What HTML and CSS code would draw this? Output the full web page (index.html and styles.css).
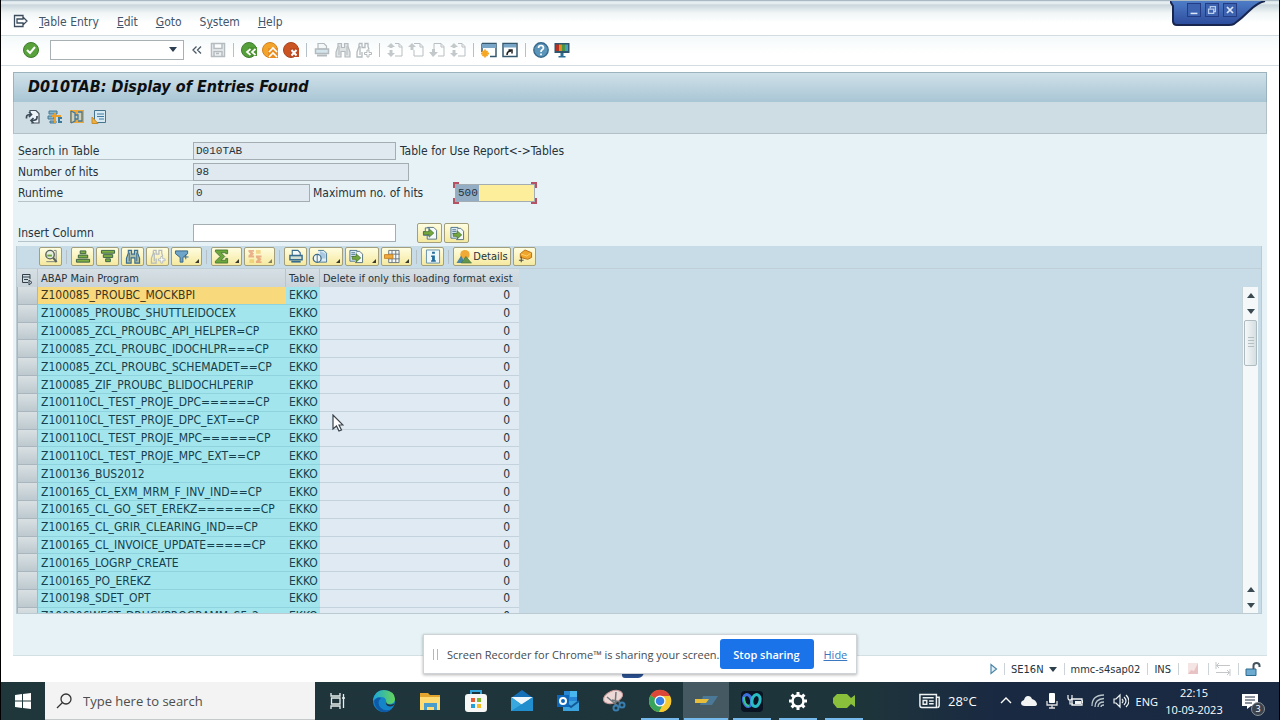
FILE: index.html
```html
<!DOCTYPE html>
<html lang="en">
<head>
    <meta charset="UTF-8">
    <meta name="viewport" content="width=device-width, initial-scale=1.0">
    <title>D010TAB: Display of Entries Found</title>
    <link rel="stylesheet" href="styles.css">
</head>
<body>

    <!-- Shared icon shapes -->
    <svg class="sprite" aria-hidden="true">
        <symbol id="i-menu" viewBox="0 0 16 16"><path d="M10 3V1.500H1.500v11H10V11M4 5h6V3l4 4-4 4V9H4z" fill="none" stroke="#3c4c5c" stroke-width="1.300"/></symbol>
        <symbol id="i-save" viewBox="0 0 16 16"><path d="M1.500 1.500h13v13h-13zM4 1.500v5h8v-5M4 14.500v-5h8v5M6 11.500h3" fill="#eef1f2" stroke="#b4bcc0" stroke-width="1.500"/></symbol>
        <symbol id="i-print" viewBox="0 0 16 16"><path d="M4 7V1.500h6l2.500 2.500v3z" fill="#f5f8f8" stroke="currentColor" stroke-width="1.200"/><path d="M1.500 7h13v4.500h-13z" fill="#b9d3e0" fill-opacity=".6" stroke="currentColor" stroke-width="1.500"/><path d="M3 13.500h10" stroke="currentColor" stroke-width="2"/></symbol>
        <symbol id="i-find" viewBox="0 0 16 16"><path d="M3 1.500h3.500v4h3v-4H13v3l2 5.500v5h-5v-5.500H6V15H1v-5l2-5.500z" fill="currentColor" fill-opacity=".4" stroke="currentColor" stroke-width="1.200"/><path d="M4 4v9M12 4v9" stroke="currentColor"/></symbol>
        <symbol id="i-findnext" viewBox="0 0 16 16"><path d="M3 1.500h3v4h3v-4h3v3l1 3M6 10v5H1v-5l2-5.500v-3M4 4v9" fill="none" stroke="currentColor" stroke-width="1.300"/><path d="M11 8h2v2.500h2.500v2H13V15h-2v-2.500H8.500v-2H11z" fill="#fff" stroke="currentColor"/></symbol>
        <symbol id="i-first" viewBox="0 0 16 16"><path d="M8 1.500h4l3 3V14H8M12 1.500V5h3" fill="none" stroke="#b9bfc2"/><path d="M4 1l4 4H5.500v1H2.500V5H0zM4 15l4-4H5.500V8h-3v3H0z" fill="#c3c9cb"/></symbol>
        <symbol id="i-prev" viewBox="0 0 16 16"><path d="M6 1.500h6l3 3V14H6V8M12 1.500V5h3" fill="none" stroke="#b9bfc2"/><path d="M4 1l4 4H5.500v3H2.500V5H0z" fill="#c3c9cb"/></symbol>
        <symbol id="i-next" viewBox="0 0 16 16"><path d="M5 7V1.500h7l3 3V14H9M12 1.500V5h3" fill="none" stroke="#b9bfc2"/><path d="M4 15l5-5H6V7H3v3H0z" fill="#c3c9cb"/></symbol>
        <symbol id="i-copyin" viewBox="0 0 16 16"><path d="M5 1.500h7l3 3V14H5V9" fill="#f4fafc" stroke="#55707c"/><path d="M1 6h2V2h4v8H1z" fill="none" stroke="#4d7391"/><path d="M1 6h6V3l5 4.500L7 12V9H1z" fill="#74a83c" stroke="#456d2c" stroke-width=".8"/></symbol>
        <symbol id="i-copyout" viewBox="0 0 16 16"><path d="M1.500 1.500H9V13H1.500zM3 4h4M3 6h4M3 8h3" fill="#dcebf4" stroke="#4d7391"/><path d="M9 2.500h3l3 3V14.500H7" fill="#f4fafc" stroke="#55707c"/><path d="M4 8h4V5l5 4.500L8 14v-3H4z" fill="#74a83c" stroke="#456d2c" stroke-width=".8"/></symbol>
        <symbol id="i-bars" viewBox="0 0 16 16"><path d="M5 2h6v3H5zM3 6.500h10v3H3zM1 11h14v3H1z" fill="#7eb041" stroke="#395f4a"/></symbol>
        <symbol id="i-barsdown" viewBox="0 0 16 16"><path d="M1 1.500h14v3H1zM3 6h10v3H3zM5.500 10.500h5v3h-5z" fill="#7eb041" stroke="#395f4a"/></symbol>
    </svg>

    <div class="sap-window">
        <header class="menu-bar">
            <button type="button" class="icon-button" aria-label="System menu"><svg><use href="#i-menu"/></svg></button>
            <nav class="menu">
                <a href="#"><u>T</u>able Entry</a>
                <a href="#"><u>E</u>dit</a>
                <a href="#"><u>G</u>oto</a>
                <a href="#">S<u>y</u>stem</a>
                <a href="#"><u>H</u>elp</a>
            </nav>
            <div class="window-controls">
                <svg class="tab-shape" viewBox="0 0 96 26" aria-hidden="true"><defs><linearGradient id="tab" x2="0" y2="1"><stop stop-color="#4d7cc7"/><stop offset="1" stop-color="#2c4b9b"/></linearGradient></defs><path d="M0 0h95q-8 2-16 10T64 23q-2 1-5 1H7q-4 0-4-4V5z" fill="url(#tab)"/><path d="M95 0q-8 2-16 10T64 23q-2 1-5 1H7q-4 0-4-4V5L0 0" fill="none" stroke="#17254f" stroke-width="2"/></svg>
                <button type="button" aria-label="Minimize"><svg viewBox="0 0 14 14"><path d="M3 11h8" stroke="#dce8fa" stroke-width="1.800"/></svg></button>
                <button type="button" aria-label="Restore"><svg viewBox="0 0 14 14"><path d="M3 6h6v5H3zM5 5V3h6v6H9" fill="none" stroke="#b9cdec" stroke-width="1.500"/></svg></button>
                <button type="button" aria-label="Close"><svg viewBox="0 0 14 14"><path d="M3.500 3.500l7 7m0-7l-7 7" stroke="#dce8fa" stroke-width="2"/></svg></button>
            </div>
        </header>

        <!-- Standard toolbar -->
        <div class="standard-toolbar">
            <button type="button" class="icon-button enter" aria-label="Enter"><svg viewBox="0 0 16 16"><circle cx="8" cy="8" r="7.500" fill="#58a13b" stroke="#3d7d2b"/><path d="M4 8l3 3 5-6" fill="none" stroke="#fff" stroke-width="2"/></svg></button>
            <div class="command">
                <input type="text" aria-label="Command field">
                <button type="button" aria-label="Command history"><svg viewBox="0 0 8 5"><path d="M0 0h8L4 5z" fill="#2d3f52"/></svg></button>
            </div>
            <button type="button" class="icon-button" aria-label="Hide command field"><svg viewBox="0 0 16 16"><path d="M7.500 4.500L4 8l3.500 3.500M12 4.500L8.500 8l3.500 3.500" fill="none" stroke="#4b5a66" stroke-width="1.300"/></svg></button>
            <button type="button" class="icon-button" aria-label="Save"><svg><use href="#i-save"/></svg></button>
            <span class="separator"></span>
            <button type="button" class="icon-button" aria-label="Back"><svg viewBox="0 0 16 16"><circle cx="8" cy="8" r="7.500" fill="#55a03a" stroke="#407d31"/><path d="M7 5h9v9H7z" fill="#4b9331"/><path d="M9.500 7L6 10l3.500 3M14.500 7L11 10l3.500 3" fill="none" stroke="#fff" stroke-width="1.700"/></svg></button>
            <button type="button" class="icon-button" aria-label="Exit"><svg viewBox="0 0 16 16"><circle cx="8" cy="8" r="7.500" fill="#f3a42a" stroke="#d0811f"/><path d="M6 6h10v10H6z" fill="#e98f22"/><path d="M7 10l4-4 4 4M7 15l4-4 4 4" fill="none" stroke="#fff" stroke-width="1.700"/></svg></button>
            <button type="button" class="icon-button" aria-label="Cancel"><svg viewBox="0 0 16 16"><circle cx="8" cy="8" r="7.500" fill="#cb5522" stroke="#a84420"/><path d="M7 6h9v9H7z" fill="#bd4a20"/><path d="M8.500 8l5 5.500m0-5.500l-5 5.500" stroke="#fff" stroke-width="2"/></svg></button>
            <span class="separator"></span>
            <button type="button" class="icon-button muted" aria-label="Print"><svg><use href="#i-print"/></svg></button>
            <button type="button" class="icon-button muted" aria-label="Find"><svg><use href="#i-find"/></svg></button>
            <button type="button" class="icon-button muted" aria-label="Find next"><svg><use href="#i-findnext"/></svg></button>
            <span class="separator"></span>
            <button type="button" class="icon-button" aria-label="First page"><svg><use href="#i-first"/></svg></button>
            <button type="button" class="icon-button" aria-label="Previous page"><svg><use href="#i-prev"/></svg></button>
            <button type="button" class="icon-button" aria-label="Next page"><svg><use href="#i-next"/></svg></button>
            <button type="button" class="icon-button" aria-label="Last page"><svg><use href="#i-first"/></svg></button>
            <span class="separator"></span>
            <button type="button" class="icon-button" aria-label="New session"><svg viewBox="0 0 16 16"><path d="M1 1.500h14v13H9M1 10V1.500" fill="none" stroke="#36586e" stroke-width="1.500"/><path d="M1 2h14v4H1z" fill="#79a6c6"/><path d="M4 7.500v8M0 11.500h8M1.500 9l5 5m0-5l-5 5" stroke="#f5a623" stroke-width="1.800"/></svg></button>
            <button type="button" class="icon-button" aria-label="Create shortcut"><svg viewBox="0 0 16 16"><path d="M1 1.500h14v13H1z" fill="#fff" stroke="#36586e" stroke-width="1.500"/><path d="M2 2h12v3.500H2z" fill="#79a6c6"/><path d="M5 13q0-4 4-4M6.500 8H10v3.500" fill="none" stroke="#222" stroke-width="1.500"/></svg></button>
            <span class="separator"></span>
            <button type="button" class="icon-button" aria-label="Help"><svg viewBox="0 0 16 16"><circle cx="8" cy="8" r="7.200" fill="#5b95b9" stroke="#376a8d" stroke-width="1.400"/><path d="M5.500 6q0-2.500 2.500-2.500T10.500 6q0 1-1.300 1.800T8 10M8 11.500v1.700" fill="none" stroke="#fff" stroke-width="1.700"/></svg></button>
            <button type="button" class="icon-button" aria-label="Customize layout"><svg viewBox="0 0 16 16"><path d="M.5 1h15v10H.5z" fill="#2f566f"/><path d="M2 2.500h3V9H2z" fill="#b73123"/><path d="M5 2.500h3V9H5z" fill="#e58d25"/><path d="M8 2.500h3V9H8z" fill="#4d9443"/><path d="M11 2.500h3V9h-3z" fill="#45a4b7"/><path d="M6.500 11h3v3h2v1.500h-7V14h2z" fill="#2d6e93"/></svg></button>
        </div>

        <main class="screen">
            <h1 class="screen-title">D010TAB: Display of Entries Found</h1>
            <div class="app-toolbar">
                <button type="button" class="icon-button" aria-label="Refresh"><svg viewBox="0 0 16 16"><path d="M5 4V1.500h6l3 3V14H6" fill="#eef5f8" stroke="#46535e" stroke-width="1.200"/><path d="M1.500 9.500V8q0-2.500 4-2.500M4 3l2.500 2.500L4 8M12 7v1.500q0 3-5 3M8.500 9L6 11.500 8.500 14" fill="none" stroke="#3c4b58" stroke-width="1.700"/></svg></button>
                <button type="button" class="icon-button" aria-label="Check"><svg viewBox="0 0 16 16"><path d="M2 2h8v3H2zM1 7h6v3H1zM3 12h6v2H3z" fill="#85b3c7" stroke="#447995"/><path d="M7 4h2v10H7zM5 6h9v2H5z" fill="#eba02e"/><path d="M15 9h-3v4h3" fill="none" stroke="#39799c" stroke-width="2"/></svg></button>
                <button type="button" class="icon-button" aria-label="Settings"><svg viewBox="0 0 16 16"><path d="M1 1h14v13H1z" fill="#eba83c"/><path d="M2 2v12M2 14l4-2V4L2 2M6 6h3v4H6M9 3h4v9H9" fill="#c7dfec" fill-opacity=".7" stroke="#43799b" stroke-width="1.300"/></svg></button>
                <button type="button" class="icon-button" aria-label="Technical view"><svg viewBox="0 0 16 16"><path d="M3.500 1.500h11v12h-11z" fill="#d7e9f3" stroke="#46748f"/><path d="M6 5h7M6 7.500h7M8 10h5" stroke="#3f7aa0"/><path d="M1 8l6 6.500H1z" fill="#f0b03d" stroke="#c88c2a"/></svg></button>
            </div>

            <form class="selection">
                <div class="field-row">
                    <label for="table">Search in Table</label>
                    <input id="table" class="wide" type="text" value="D010TAB" readonly>
                    <span class="note">Table for Use Report&lt;-&gt;Tables</span>
                </div>
                <div class="field-row">
                    <label for="hits">Number of hits</label>
                    <input id="hits" class="wider" type="text" value="98" readonly>
                </div>
                <div class="field-row">
                    <label for="runtime">Runtime</label>
                    <input id="runtime" class="short" type="text" value="0" readonly>
                    <label class="inline-label" for="max">Maximum no. of hits</label>
                    <div class="focus-field">
                        <input id="max" type="text" value="500">
                        <i></i><i></i><i></i><i></i>
                    </div>
                </div>
                <div class="field-row insert-row">
                    <label for="column">Insert Column</label>
                    <input id="column" class="wide" type="text">
                    <div class="insert-buttons">
                        <button type="button" class="sap-button" aria-label="Insert column"><svg><use href="#i-copyin"/></svg></button>
                        <button type="button" class="sap-button" aria-label="Export column"><svg><use href="#i-copyout"/></svg></button>
                    </div>
                </div>
            </form>

            <section class="alv">
                <div class="alv-toolbar">
                    <button type="button" class="sap-button" aria-label="Details view"><svg viewBox="0 0 16 16"><path d="M11 1.500h2.500v12H3" fill="none" stroke="#77817d"/><circle cx="7" cy="6" r="4.500" fill="#e5eddf" stroke="#59645e" stroke-width="1.500"/><path d="M10 9l4 5" stroke="#59645e" stroke-width="2.200"/><path d="M4 7h5" stroke="#6aa336" stroke-width="2"/></svg></button>
                    <span class="separator"></span>
                    <button type="button" class="sap-button" aria-label="Sort ascending"><svg><use href="#i-bars"/></svg></button>
                    <button type="button" class="sap-button" aria-label="Sort descending"><svg><use href="#i-barsdown"/></svg></button>
                    <button type="button" class="sap-button blue" aria-label="Find"><svg><use href="#i-find"/></svg></button>
                    <button type="button" class="sap-button muted" aria-label="Find next"><svg><use href="#i-findnext"/></svg></button>
                    <button type="button" class="sap-button split" aria-label="Filter"><svg viewBox="0 0 16 16"><path d="M1 2h13v3L9 9v5H6V9L1 5z" fill="#6ea5c8" stroke="#356486"/><path d="M12 6v5M10 8.500h5" stroke="#356486"/></svg></button>
                    <span class="separator"></span>
                    <button type="button" class="sap-button split" aria-label="Total"><svg viewBox="0 0 16 16"><path d="M1 1h13v4h-2V4H7l4 4-4 4h5v-2h2v5H1v-2l5-5-5-5z" fill="#6ca63c" stroke="#3a6832" stroke-width=".8"/></svg></button>
                    <button type="button" class="sap-button split faded" aria-label="Subtotal"><svg viewBox="0 0 16 16"><path d="M1 1h6v2H5l2 2-2 2h2v2H1V7l2-2-2-2zM9 7h6v2h-2l2 2-2 2h2v2H9v-2l2-2-2-2z" fill="#df8562"/><path d="M9 1h5v4H9zM2 11h5v4H2z" fill="#ecc15c"/></svg></button>
                    <span class="separator"></span>
                    <button type="button" class="sap-button blue" aria-label="Print"><svg><use href="#i-print"/></svg></button>
                    <button type="button" class="sap-button split wide-split" aria-label="Views"><svg viewBox="0 0 16 16"><path d="M6 1.500h6l3 3V14H6" fill="#dcebf4" stroke="#4c7692"/><path d="M8 2v8h6V5z" fill="#aac9df"/><circle cx="5" cy="10" r="4.200" fill="#f2f7f7" stroke="#3e6b8a" stroke-width="1.400"/><path d="M5 6v8" stroke="#3e6b8a"/></svg></button>
                    <button type="button" class="sap-button split wide-split" aria-label="Export"><svg><use href="#i-copyout"/></svg></button>
                    <button type="button" class="sap-button split" aria-label="Layout"><svg viewBox="0 0 16 16"><path d="M4.500 1.500h11v13h-11zM8 1.500v13M12 1.500v13M4 5.500h12M4 10.500h12" fill="#f7faf7" stroke="#67737b"/><path d="M0 6h9v4H0z" fill="#f0a93a" stroke="#c6832a"/></svg></button>
                    <span class="separator"></span>
                    <button type="button" class="sap-button" aria-label="Information"><svg viewBox="0 0 16 16"><path d="M1 1h14v14H1z" fill="#edf6fa" stroke="#628da7"/><path d="M7 3h3v2H7zM6 7h4v5h1v1.500H6V12h1V8.500H6z" fill="#236b9c"/></svg></button>
                    <span class="separator"></span>
                    <button type="button" class="sap-button details"><svg viewBox="0 0 16 16"><circle cx="9" cy="6" r="5" fill="#f0aa35"/><path d="M0 15l5-8 4 8z" fill="#4a86a7"/><path d="M5 15l5-7 6 7z" fill="#63954b" stroke="#3c6d48" stroke-width=".6"/></svg>Details</button>
                    <button type="button" class="sap-button" aria-label="Flag"><svg viewBox="0 0 16 16"><path d="M3 5l5-4 7 3v5l-4 2-8-2z" fill="#f0a52b" stroke="#b36e1c"/><path d="M4 5.500l6 2 4-3" fill="none" stroke="#ffd36b"/><path d="M4 8v6M1.500 12h5" stroke="#575044" stroke-width="1.200"/></svg></button>
                </div>

                <div class="alv-body">
                    <div class="table-area">
                        <table>
                            <colgroup><col class="col-select"><col class="col-program"><col class="col-table"><col class="col-delete"></colgroup>
                            <thead>
                                <tr><th><svg class="select-all" viewBox="0 0 12 12" role="img" aria-label="Select all"><path d="M9 6V1.500H1.500v8H7M1.500 4H9M3 6.500h4M8 7l3 2.500L8 12z" fill="none" stroke="#33404a"/></svg></th><th>ABAP Main Program</th><th>Table</th><th>Delete if only this loading format exist</th></tr>
                            </thead>
                            <tbody>
                                <tr class="current"><td></td><td>Z100085_PROUBC_MOCKBPI</td><td>EKKO</td><td>0</td></tr>
                                <tr><td></td><td>Z100085_PROUBC_SHUTTLEIDOCEX</td><td>EKKO</td><td>0</td></tr>
                                <tr><td></td><td>Z100085_ZCL_PROUBC_API_HELPER=CP</td><td>EKKO</td><td>0</td></tr>
                                <tr><td></td><td>Z100085_ZCL_PROUBC_IDOCHLPR===CP</td><td>EKKO</td><td>0</td></tr>
                                <tr><td></td><td>Z100085_ZCL_PROUBC_SCHEMADET==CP</td><td>EKKO</td><td>0</td></tr>
                                <tr><td></td><td>Z100085_ZIF_PROUBC_BLIDOCHLPERIP</td><td>EKKO</td><td>0</td></tr>
                                <tr><td></td><td>Z100110CL_TEST_PROJE_DPC======CP</td><td>EKKO</td><td>0</td></tr>
                                <tr><td></td><td>Z100110CL_TEST_PROJE_DPC_EXT==CP</td><td>EKKO</td><td>0</td></tr>
                                <tr><td></td><td>Z100110CL_TEST_PROJE_MPC======CP</td><td>EKKO</td><td>0</td></tr>
                                <tr><td></td><td>Z100110CL_TEST_PROJE_MPC_EXT==CP</td><td>EKKO</td><td>0</td></tr>
                                <tr><td></td><td>Z100136_BUS2012</td><td>EKKO</td><td>0</td></tr>
                                <tr><td></td><td>Z100165_CL_EXM_MRM_F_INV_IND==CP</td><td>EKKO</td><td>0</td></tr>
                                <tr><td></td><td>Z100165_CL_GO_SET_EREKZ=======CP</td><td>EKKO</td><td>0</td></tr>
                                <tr><td></td><td>Z100165_CL_GRIR_CLEARING_IND==CP</td><td>EKKO</td><td>0</td></tr>
                                <tr><td></td><td>Z100165_CL_INVOICE_UPDATE=====CP</td><td>EKKO</td><td>0</td></tr>
                                <tr><td></td><td>Z100165_LOGRP_CREATE</td><td>EKKO</td><td>0</td></tr>
                                <tr><td></td><td>Z100165_PO_EREKZ</td><td>EKKO</td><td>0</td></tr>
                                <tr><td></td><td>Z100198_SDET_OPT</td><td>EKKO</td><td>0</td></tr>
                                <tr><td></td><td>Z100206WEST_DRUCKPROGRAMM_SF_2</td><td>EKKO</td><td>0</td></tr>
                            </tbody>
                        </table>
                    </div>
                    <div class="scrollbar">
                        <button type="button" aria-label="Scroll up"><svg viewBox="0 0 8 5"><path d="M0 5h8L4 0z" fill="#3a4a52"/></svg></button>
                        <button type="button" aria-label="Page down"><svg viewBox="0 0 8 5"><path d="M0 0h8L4 5z" fill="#3a4a52"/></svg></button>
                        <div class="track"><div class="thumb"></div></div>
                        <button type="button" aria-label="Page up"><svg viewBox="0 0 8 5"><path d="M0 5h8L4 0z" fill="#3a4a52"/></svg></button>
                        <button type="button" aria-label="Scroll down"><svg viewBox="0 0 8 5"><path d="M0 0h8L4 5z" fill="#3a4a52"/></svg></button>
                    </div>
                </div>
            </section>
        </main>

        <footer class="status-bar">
            <svg class="status-arrow" viewBox="0 0 8 12" aria-hidden="true"><path d="M1 1.500v9L6.500 6z" fill="#e3f2f9" stroke="#4c86a8" stroke-width="1.200"/></svg>
            <span class="status-item transaction">SE16N <svg viewBox="0 0 8 5" aria-hidden="true"><path d="M0 0h8L4 5z" fill="#2d3f4a"/></svg></span>
            <span class="status-item host">mmc-s4sap02</span>
            <span class="status-item mode">INS</span>
            <span class="status-item"><svg class="status-icon" viewBox="0 0 16 16" aria-hidden="true"><path d="M3 2h10v11H3z" fill="#f5e4e4"/><path d="M3 13l3-4 3 1 4-8v11z" fill="#e9c2c4"/></svg></span>
            <span class="status-item"><svg class="status-icon" viewBox="0 0 16 16" aria-hidden="true"><path d="M1 1v7M1 4.500h14M4 2L1.500 4.500 4 7M15 8v7M1 11.500h14M12 9l2.500 2.500L12 14" fill="none" stroke="#c3c7c9"/></svg></span>
            <span class="status-item"><svg class="status-icon" viewBox="0 0 16 16" role="img" aria-label="Unlocked"><path d="M1 8h10v6.500H1z" fill="#6eabd0" stroke="#2d6a8f"/><path d="M8.500 8V4.500q0-2.500 3-2.500t3 2.500V6" fill="none" stroke="#44535c" stroke-width="2"/></svg></span>
        </footer>

        <svg class="cursor" viewBox="0 0 12 18" aria-hidden="true"><path d="M1 1v14l3.500-3 2.500 5 2.500-1-2.500-5h4z" fill="#fff" stroke="#39424a" stroke-width="1.200"/></svg>
        <span class="bottom-tab"></span>
        <div class="share-bar">
            <span class="grip"></span>
            <span class="share-text">Screen Recorder for Chrome™ is sharing your screen.</span>
            <button type="button">Stop sharing</button>
            <a href="#">Hide</a>
        </div>
    </div>

    <!-- Windows taskbar -->
    <div class="taskbar">
        <button type="button" class="start" aria-label="Start"><svg viewBox="0 0 16 16"><path d="M0 2l7-1v6.500H0zM8 1l8-1v7.500H8zM0 8.500h7V15l-7-1zM8 8.500h8V16l-8-1z" fill="#fff"/></svg></button>
        <div class="search">
            <svg viewBox="0 0 16 16" aria-hidden="true"><circle cx="10" cy="6" r="5" fill="none" stroke="#333" stroke-width="1.300"/><path d="M6.500 9.500L1 15" stroke="#333" stroke-width="1.300"/></svg>
            <input type="text" placeholder="Type here to search" aria-label="Type here to search">
        </div>
        <div class="apps">
            <button type="button" aria-label="Task view"><svg class="small" viewBox="0 0 16 16"><path d="M1 0v3h9V0M1.500 5h8.500v6H1.500zM1 16v-3h9v3M13.500 1v14M12 5h3" fill="none" stroke="#e8eeee" stroke-width="1.300"/></svg></button>
            <button type="button" aria-label="Edge"><svg viewBox="0 0 24 24"><defs><linearGradient id="edge" x2="1"><stop stop-color="#1ca6d9"/><stop offset="1" stop-color="#66d556"/></linearGradient></defs><circle cx="12" cy="12" r="11" fill="#1583c7"/><path d="M1 11Q3 1 12 1q11 1 11 9 0 5-6 5-4 0-3-3 0-4-5-4-5 0-8 4z" fill="url(#edge)"/><path d="M9 9q-5 5 0 10 4 4 11 1-4 4-9 3Q3 21 2 12q3-5 7-3z" fill="#0f5aa8"/><path d="M14 12q0 3 3 3.500 3 .5 5.500-1-1 3-4.500 3-5-.5-4-5.500z" fill="#1f343a"/></svg></button>
            <button type="button" aria-label="File Explorer"><svg viewBox="0 0 24 24"><path d="M2 4h8l2 2h10v14H2z" fill="#e2a52d"/><path d="M2 8h20v13H2z" fill="#ffdb73"/><path d="M6 14h13v7h-3v-3H9v3H6z" fill="#4a9ccb"/></svg></button>
            <button type="button" aria-label="Microsoft Store"><svg viewBox="0 0 24 24"><path d="M7 6V2h10v4" fill="none" stroke="#34a5db" stroke-width="2"/><rect x="1" y="5" width="22" height="18" rx="3" fill="#f7f7f5"/><path d="M7 9h4v4H7z" fill="#e85a32"/><path d="M13 9h4v4h-4z" fill="#83b92f"/><path d="M7 15h4v4H7z" fill="#249fd9"/><path d="M13 15h4v4h-4z" fill="#f6bb25"/></svg></button>
            <button type="button" aria-label="Mail"><svg viewBox="0 0 24 24"><path d="M1 9L12 1l11 8v13H1z" fill="#1470b7"/><path d="M1 8h22L12 16z" fill="#eef8fc"/><path d="M1 8l11 8 11-8v14H1z" fill="#39a8df"/><path d="M1 22L23 8v14z" fill="#218ecd"/></svg></button>
            <button type="button" aria-label="Outlook"><svg viewBox="0 0 24 24"><path d="M8 2h13v12H8z" fill="#2787d4"/><path d="M14 2h7v6h-7z" fill="#48b7ed"/><path d="M7 12h16v10H7z" fill="#3ba4df"/><path d="M7 12l8 6 8-6" fill="none" stroke="#13599a" stroke-width="2"/><path d="M1 6h12v12H1z" fill="#0d66b8"/><circle cx="7" cy="12" r="3" fill="none" stroke="#fff" stroke-width="2"/></svg></button>
            <button type="button" aria-label="Snipping Tool"><svg viewBox="0 0 24 24"><ellipse cx="11" cy="8" rx="10" ry="6" transform="rotate(-22 11 8)" fill="#ecd8d6" stroke="#c99c9c"/><path d="M5 8l11 9M14 3l-1 14M10 11l8 2" stroke="#70777a" stroke-width="1.500"/><circle cx="14" cy="19" r="2.500" fill="none" stroke="#397eae" stroke-width="2"/><circle cx="20" cy="16" r="2.500" fill="none" stroke="#397eae" stroke-width="2"/></svg></button>
            <button type="button" class="running" aria-label="Chrome"><svg viewBox="0 0 24 24"><circle cx="12" cy="12" r="11" fill="#f6c933"/><path d="M12 12L2.500 6.500A11 11 0 0 1 22 7h-10z" fill="#dc4738"/><path d="M2.500 6.500A11 11 0 0 0 11 23l5-9-4-2z" fill="#38a35a"/><path d="M12 7h10A11 11 0 0 1 11 23l5-9z" fill="#f6c933"/><circle cx="12" cy="12" r="5.500" fill="#fff"/><circle cx="12" cy="12" r="4.300" fill="#367fe4"/></svg></button>
            <button type="button" class="running active" aria-label="SAP Logon"><svg viewBox="0 0 24 24"><path d="M9 7h15l-6 9H6z" fill="#4b7896"/><path d="M1 10h14l-3 4H1z" fill="#e7be3c"/></svg></button>
            <button type="button" class="running" aria-label="Webex"><svg viewBox="0 0 24 24"><rect x="1" y="2" width="22" height="21" rx="4" fill="#091322"/><ellipse cx="7.500" cy="11.500" rx="4" ry="6" transform="rotate(-14 7.500 11.500)" fill="none" stroke="#3d70dc" stroke-width="3"/><ellipse cx="16" cy="11.500" rx="4" ry="6" transform="rotate(14 16 11.500)" fill="none" stroke="#29bcc3" stroke-width="3"/><path d="M4 8q0 8 5 9" fill="none" stroke="#35c78b" stroke-width="2"/></svg></button>
            <button type="button" class="running" aria-label="Settings"><svg viewBox="0 0 24 24"><circle cx="12" cy="12" r="5.500" fill="none" stroke="#fff" stroke-width="2.500"/><path d="M12 3v4M12 17v4M3 12h4M17 12h4M5.600 5.600l3 3M15.400 15.400l3 3M18.400 5.600l-3 3M8.600 15.400l-3 3" stroke="#fff" stroke-width="3"/><circle cx="12" cy="12" r="4" fill="#1f343a"/></svg></button>
            <button type="button" class="running" aria-label="Screen recorder"><svg viewBox="0 0 24 24"><path d="M5 5h10l4 4 4-3v12l-4-3-4 4H5l-4-5V9z" fill="#8abf3c"/></svg></button>
        </div>
        <div class="tray">
            <svg class="news" viewBox="0 0 24 16" role="img" aria-label="News"><path d="M1 1h18v14H3q-2 0-2-2zM19 4h3v9q0 2-2 2" fill="none" stroke="#eef2f2" stroke-width="1.600"/><path d="M4 4.500h12M11 8h5M11 11h5M4.500 7.500h4v4h-4z" fill="none" stroke="#eef2f2" stroke-width="1.500"/></svg>
            <span class="weather">28°C</span>
            <svg viewBox="0 0 16 16" aria-hidden="true"><path d="M3 10l5-5 5 5" fill="none" stroke="#fff" stroke-width="1.400"/></svg>
            <svg viewBox="0 0 16 16" aria-hidden="true"><path d="M4 13q-4 0-4-3 0-2 3-3 1-4 4-4 3 0 4 3 4 1 5 5 0 2-3 2z" fill="#f3f5f4"/></svg>
            <svg viewBox="0 0 16 16" aria-hidden="true"><rect x="5" y="0" width="6" height="10" rx="1" fill="#fff"/><path d="M3 8v4h10V8M8 12v3M5 15h6" fill="none" stroke="#ddd" stroke-width="1.300"/></svg>
            <svg viewBox="0 0 16 16" aria-hidden="true"><path d="M5 6h10v6H5zM15 8h1v2" fill="none" stroke="#f2f4f4" stroke-width="1.300"/><path d="M8 8h6v3H8z" fill="#f2f4f4"/><path d="M1 2v3q0 2 2 2t2-2V2M3 7v4h3" fill="none" stroke="#f2f4f4" stroke-width="1.200"/></svg>
            <svg viewBox="0 0 16 16" aria-hidden="true"><path d="M2 13Q2 2 14 2M5 14Q5 6 14 5.500M8 14q0-5 6-5M11 14q0-2 3-2" fill="none" stroke="#b9c5c9" stroke-width="1.300"/></svg>
            <svg viewBox="0 0 16 16" aria-hidden="true"><path d="M1 6h2l4-4v12l-4-4H1zM9 6q2 2 0 4M11 4q4 4 0 8M13 2q6 6 0 12" fill="none" stroke="#edf2f2" stroke-width="1.200"/></svg>
            <span class="language">ENG</span>
            <div class="clock"><span>22:15</span><span>10-09-2023</span></div>
            <button type="button" class="notifications" aria-label="Notifications"><svg viewBox="0 0 16 16"><path d="M0 1h16v12H9l-4 3v-3H0z" fill="#fff"/><path d="M3 4h10M3 7h10M3 10h7" stroke="#1a2940"/></svg><span class="badge">3</span></button>
        </div>
    </div>

</body>
</html>
```
FILE: styles.css
```css
/* General Styles */
* {
    box-sizing: border-box;
}

body {
    margin: 0;
    height: 100vh;
    display: flex;
    flex-direction: column;
    overflow: hidden;
    font-family: "DejaVu Sans Condensed", "DejaVu Sans", sans-serif;
    font-size: 11px;
    color: #26333c;
    background: #fff;
    border-left: 1px solid #000;
    border-right: 1px solid #000;
}

button, input {
    font: inherit;
    color: inherit;
    margin: 0;
    padding: 0;
}

button {
    border: none;
    background: none;
    cursor: pointer;
}

svg {
    display: block;
    flex: none;
}

.sprite {
    position: absolute;
    width: 0;
    height: 0;
}

.sap-window {
    position: relative;
    flex: 1;
    min-height: 0;
    display: flex;
    flex-direction: column;
}

/* Menu bar */
.menu-bar {
    position: relative;
    height: 36px;
    flex: none;
    display: flex;
    align-items: center;
    padding: 7px 12px 0;
    border-top: 1px solid #a9b9c4;
    border-bottom: 1px solid #d3dde1;
    background: linear-gradient(#d5e0e5 0, #eef3f5 2px, #c9d6dc 4px, #f1f6f7 12px, #fff 22px);
}

.menu {
    display: flex;
    gap: 18px;
    margin-left: 10px;
    font-size: 12px;
}

.menu a {
    color: #435568;
    text-decoration: none;
}

.icon-button svg {
    width: 16px;
    height: 16px;
}

.window-controls {
    position: absolute;
    top: 0;
    right: 13px;
    width: 96px;
    height: 26px;
    display: flex;
    gap: 4px;
    padding: 2px 0 0 17px;
}

.window-controls .tab-shape {
    position: absolute;
    inset: 0;
}

.window-controls button {
    position: relative;
    width: 14px;
    height: 14px;
    border: 1px solid #233c84;
    background: #3c62b0;
}

/* Standard toolbar */
.standard-toolbar {
    height: 30px;
    flex: none;
    display: flex;
    align-items: center;
    gap: 5px;
    padding: 0 0 2px 22px;
    background: linear-gradient(#f4f9fa, #fff 60%);
    border-bottom: 1px solid #d3dde1;
}

.command {
    display: flex;
    width: 134px;
    height: 20px;
    margin-left: 6px;
    border: 1px solid #a9b0b4;
    background: #fff;
}

.command input {
    flex: 1;
    min-width: 0;
    border: none;
    outline: none;
}

.command button {
    width: 20px;
    display: grid;
    place-items: center;
}

.command svg {
    width: 8px;
    height: 5px;
}

.separator {
    width: 1px;
    height: 14px;
    margin: 0 2px;
    background: #b5c1c7;
}

.muted {
    color: #b4bbbe;
}

.blue {
    color: #376c8e;
}

/* Screen */
.screen {
    flex: 1;
    min-height: 0;
    display: flex;
    flex-direction: column;
    margin: 6px 12px 0;
    background: #e6f2f5;
    border-bottom: 1px solid #d2dfe3;
}

.screen-title {
    margin: 0;
    height: 30px;
    flex: none;
    padding-left: 14px;
    font-size: 16px;
    line-height: 28px;
    font-style: italic;
    color: #0b1014;
    border: 1px solid #9bb2bf;
    border-bottom: none;
    background: linear-gradient(#cfe0e8, #a9c6d5);
}

.app-toolbar {
    height: 32px;
    flex: none;
    display: flex;
    align-items: center;
    gap: 6px;
    padding: 0 0 2px 11px;
    background: #cedde4;
    border: 1px solid #b2c1c8;
    border-top: none;
}

/* Selection fields */
.selection {
    display: flex;
    flex-direction: column;
    gap: 3px;
    padding: 8px 5px 3px;
    font-size: 12px;
}

.field-row {
    display: flex;
    align-items: center;
    height: 18px;
}

.field-row > label:first-child {
    width: 175px;
    height: 18px;
    line-height: 18px;
    border-bottom: 1px solid #b6c3c9;
}

.field-row input {
    height: 18px;
    padding: 0 2px;
    font-family: "Liberation Mono", monospace;
    font-size: 11px;
    border: 1px solid #a3adb2;
    background: #fff;
    outline: none;
}

.field-row input[readonly] {
    background: #dfe9ef;
}

.wide {
    width: 203px;
}

.wider {
    width: 216px;
}

.short {
    width: 117px;
}

.note {
    margin-left: 4px;
}

.inline-label {
    width: 145px;
    padding-left: 3px;
}

.focus-field {
    position: relative;
    width: 80px;
}

.focus-field input {
    display: block;
    width: 100%;
    background: linear-gradient(90deg, #93adc4 23px, #fdee9c 23px);
}

.focus-field i {
    position: absolute;
    width: 6px;
    height: 6px;
    border: 0 solid #b55263;
}

.focus-field i:nth-of-type(1) {
    top: -2px;
    left: -2px;
    border-width: 2px 0 0 2px;
}

.focus-field i:nth-of-type(2) {
    top: -2px;
    right: -2px;
    border-width: 2px 2px 0 0;
}

.focus-field i:nth-of-type(3) {
    bottom: -2px;
    left: -2px;
    border-width: 0 0 2px 2px;
}

.focus-field i:nth-of-type(4) {
    bottom: -2px;
    right: -2px;
    border-width: 0 2px 2px 0;
}

.insert-row {
    height: 20px;
    margin-top: 18px;
}

.insert-buttons {
    display: flex;
    gap: 2px;
    margin-left: 21px;
}

.sap-button {
    position: relative;
    width: 23px;
    height: 19px;
    display: flex;
    align-items: center;
    justify-content: center;
    border: 1px solid #a39f7c;
    border-radius: 2px;
    background: linear-gradient(#fffde0, #f5e99f);
}

.sap-button svg {
    width: 16px;
    height: 15px;
}

.insert-buttons .sap-button {
    width: 25px;
    height: 20px;
}

.split {
    width: 31px;
    justify-content: flex-start;
    padding-left: 2px;
}

.wide-split {
    width: 34px;
}

.split::after {
    content: "";
    margin: 8px 2px 0 auto;
    border-left: 4px solid transparent;
    border-bottom: 4px solid #39392d;
}

.faded svg, .faded::after {
    opacity: 0.6;
}

.details {
    width: 58px;
    gap: 1px;
    font-size: 11px;
}

/* Result grid */
.alv {
    flex: 1;
    min-height: 0;
    display: flex;
    flex-direction: column;
    margin: 0 5px 41px 3px;
    border: 1px solid #bccad2;
    border-top: none;
    background: #c8dce8;
}

.alv-toolbar {
    height: 23px;
    flex: none;
    display: flex;
    align-items: center;
    gap: 2px;
    padding: 0 0 1px 22px;
    border-bottom: 1px solid #bfced7;
}

.alv-body {
    flex: 1;
    min-height: 0;
    display: flex;
    justify-content: space-between;
}

.table-area {
    overflow: hidden;
}

table {
    width: 502px;
    height: 357px;
    table-layout: fixed;
    border-spacing: 0;
    font-size: 12px;
    white-space: nowrap;
}

.col-select {
    width: 21px;
}

.col-program {
    width: 248px;
}

.col-table {
    width: 34px;
}

th, td {
    padding: 0 2px 0 3px;
    height: 17px;
    line-height: 16px;
    text-align: left;
}

th {
    height: 18px;
    font-size: 11px;
    font-weight: normal;
    background: linear-gradient(#d6dfe4, #c9d4da);
    border-right: 1px solid #b9c5cb;
    padding: 1px 0 0 3px;
}

th:last-child {
    border-right: none;
}

.select-all {
    width: 12px;
    height: 12px;
    margin-left: 1px;
}

td {
    background: #a3e5ed;
    border-bottom: 1px solid #8fd3de;
    color: #153f4d;
}

td:first-child {
    background: linear-gradient(#d9e0e3, #bdc9cf);
    border: 1px solid #a9b6bd;
    border-width: 0 1px 1px;
}

td:last-child {
    background: #dfeaf2;
    border-bottom-color: #c4d2dd;
    color: #26333c;
    text-align: right;
    padding-right: 9px;
}

.current td:nth-child(2) {
    background: #f8d97c;
    color: #3c3520;
}

.scrollbar {
    width: 16px;
    flex: none;
    display: flex;
    flex-direction: column;
    margin: 18px 3px 0 0;
    background: #f4f8f9;
    border-left: 1px solid #c7d4da;
}

.scrollbar button {
    height: 16px;
    flex: none;
    display: grid;
    place-items: center;
}

.scrollbar svg {
    width: 8px;
    height: 5px;
}

.track {
    flex: 1;
    padding: 1px;
}

.thumb {
    height: 46px;
    border: 1px solid #aebbc0;
    border-radius: 2px;
    background: linear-gradient(90deg, #f5f8f9, #d5dee1);
    display: grid;
    place-items: center;
}

.thumb::after {
    content: "";
    width: 6px;
    height: 12px;
    background: repeating-linear-gradient(#b4bfc4 0 1px, transparent 1px 3px);
}

/* Status bar */
.status-bar {
    height: 26px;
    flex: none;
    display: flex;
    align-items: center;
    justify-content: flex-end;
    padding-right: 18px;
    font-size: 11px;
}

.status-arrow {
    width: 8px;
    height: 12px;
    margin-right: 6px;
}

.status-item {
    display: flex;
    align-items: center;
    gap: 5px;
    height: 12px;
    padding: 0 7px 0 6px;
    border-left: 1px solid #ccd4d8;
}

.transaction svg {
    width: 8px;
    height: 5px;
}

.status-icon {
    width: 16px;
    height: 16px;
}

.status-item:last-child {
    padding-right: 0;
}

.cursor {
    position: absolute;
    left: 331px;
    top: 414px;
    width: 12px;
    height: 18px;
}

.bottom-tab {
    position: absolute;
    left: 50%;
    bottom: 4px;
    width: 22px;
    height: 8px;
    margin-left: -18px;
    border-radius: 0 0 6px 3px;
    background: #2b5293;
}

/* Screen sharing bar */
.share-bar {
    position: absolute;
    left: 50%;
    bottom: 8px;
    transform: translateX(-50%);
    width: 434px;
    height: 40px;
    display: flex;
    align-items: center;
    padding: 0 9px;
    background: #fff;
    border: 1px solid #cdd3d6;
    box-shadow: 0 1px 3px rgba(0, 0, 0, 0.3);
    font-family: "Open Sans", "Noto Sans", sans-serif;
    font-size: 11px;
    color: #454b50;
    white-space: nowrap;
}

.grip {
    width: 5px;
    height: 11px;
    flex: none;
    border: 1px solid #b3b8ba;
    border-width: 0 1px;
}

.share-text {
    margin: 0 auto 0 9px;
}

.share-bar button {
    width: 94px;
    height: 30px;
    flex: none;
    border-radius: 3px;
    background: #1a73e8;
    color: #fff;
    font-weight: 600;
}

.share-bar a {
    margin-left: 10px;
    color: #3c78c2;
}

/* Taskbar */
.taskbar {
    height: 38px;
    flex: none;
    display: flex;
    background: linear-gradient(90deg, #1f363b 0, #1e343b 68%, #192942 78%, #1a2a42);
    color: #fff;
    font-family: "Open Sans", "Noto Sans", sans-serif;
    font-size: 11px;
}

.taskbar button {
    display: grid;
    place-items: center;
}

.start {
    width: 44px;
}

.start svg {
    width: 16px;
    height: 16px;
}

.search {
    width: 270px;
    display: flex;
    align-items: center;
    gap: 11px;
    padding-left: 11px;
    background: #f2f3f2;
    border-bottom: 1px solid #c5c9ca;
}

.search svg {
    width: 16px;
    height: 16px;
}

.search input {
    flex: 1;
    min-width: 0;
    border: none;
    outline: none;
    background: none;
    font-size: 13px;
}

.search input::placeholder {
    color: #4d4d4d;
    opacity: 1;
}

.apps {
    display: flex;
}

.apps button {
    width: 46px;
}

.apps svg {
    width: 24px;
    height: 24px;
}

.apps .small {
    width: 16px;
    height: 16px;
}

.apps .running {
    background: linear-gradient(#76b9ed, #76b9ed) center bottom / 38px 2px no-repeat;
}

.apps .active {
    background: linear-gradient(#76b9ed, #76b9ed) center bottom / 44px 2px no-repeat, #445961;
}

.tray {
    margin-left: auto;
    display: flex;
    align-items: center;
    gap: 7px;
    padding-right: 21px;
}

.tray svg {
    width: 16px;
    height: 16px;
}

.tray .news {
    width: 22px;
}

.weather {
    margin-right: 14px;
    font-size: 13px;
}

.clock {
    width: 58px;
    display: flex;
    flex-direction: column;
    align-items: center;
    line-height: 17px;
    margin-right: 8px;
    white-space: nowrap;
}

.notifications {
    position: relative;
    margin-left: 4px;
}

.badge {
    position: absolute;
    right: -7px;
    bottom: -7px;
    width: 14px;
    height: 14px;
    border-radius: 50%;
    background: #39424d;
    border: 1px solid #8b949b;
    font-size: 9px;
    line-height: 12px;
    text-align: center;
}
```
